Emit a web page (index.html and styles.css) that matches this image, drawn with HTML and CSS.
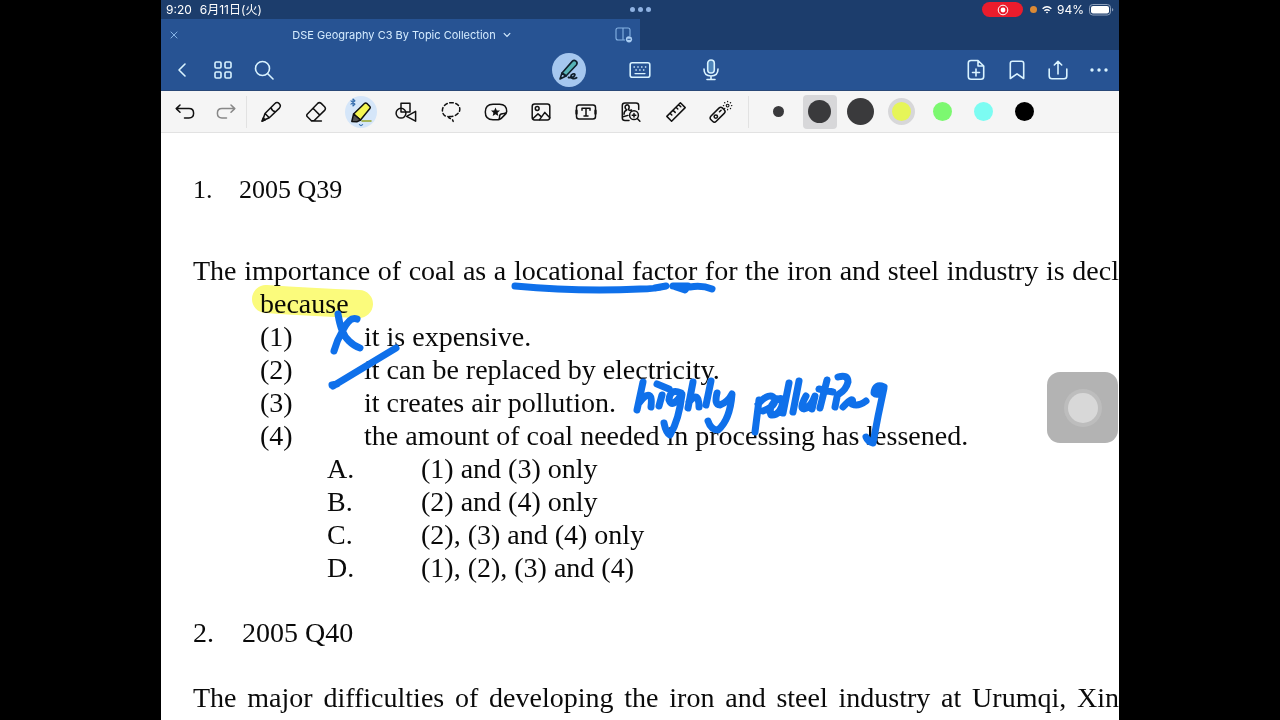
FILE: index.html
```html
<!DOCTYPE html>
<html lang="en">
<head>
    <meta charset="UTF-8">
    <meta name="viewport" content="width=device-width, initial-scale=1.0">
    <title>DSE Geography C3 By Topic Collection</title>
    <link rel="stylesheet" href="styles.css">
</head>
<body>
    <div class="screen">
        <header>
            <div class="status-bar">
                <div class="status-left"><span>9:20</span><span lang="ja">6月11日(火)</span></div>
                <div class="window-dots"><i></i><i></i><i></i></div>
                <div class="status-right">
                    <span class="recording">
                        <svg width="12" height="12" viewBox="0 0 12 12"><circle cx="6" cy="6" r="4.8" fill="none" stroke="#fff"/><circle cx="6" cy="6" r="2.4" fill="#fff"/></svg>
                    </span>
                    <span class="mic-dot"></span>
                    <svg width="10" height="8" viewBox="0 0 10 8" fill="none" stroke="#fff" stroke-width="1.4"><path d="M.6 2.8Q5-1.2 9.4 2.8M2.4 4.8Q5 2.6 7.6 4.8"/><path d="M3.8 6.2Q5 5.2 6.2 6.2L5 7.5z" fill="#fff" stroke="none"/></svg>
                    <span>94%</span>
                    <svg width="25" height="12" viewBox="0 0 25 12"><rect x=".5" y=".5" width="21" height="10.5" rx="3.2" fill="none" stroke="#8da0bc"/><rect x="2" y="2" width="18" height="7.5" rx="2" fill="#fff"/><path d="M23 4v3.5q1.3-.5 1.3-1.7T23 4" fill="#8da0bc"/></svg>
                </div>
            </div>

            <div class="tabs">
                <div class="tab">
                    <button class="tab-close" aria-label="Close tab">
                        <svg width="8" height="8" viewBox="0 0 8 8" fill="none" stroke="#86b3e4" stroke-width="1"><path d="M.7.7l6.6 6.6M7.3.7L.7 7.3"/></svg>
                    </button>
                    <button class="tab-title">DSE Geography C3 By Topic Collection
                        <svg width="8" height="6" viewBox="0 0 8 6" fill="none" stroke="#d5ecff" stroke-width="1.2"><path d="M.8 1.2L4 4.4l3.2-3.2"/></svg>
                    </button>
                    <button class="tab-split" aria-label="Split view">
                        <svg width="18" height="16" viewBox="0 0 18 16" fill="none" stroke="#86b3e4" stroke-width="1.1"><path d="M10 13H3Q1 13 1 11V3Q1 1 3 1h10q2 0 2 2v6M8 1v12"/><circle cx="14" cy="12.3" r="3.1" fill="#a9cdf3" stroke="none"/><path d="M12.4 12.3h3.2" stroke="#275393"/></svg>
                    </button>
                </div>
            </div>

            <nav class="nav-bar">
                <div class="nav-group">
                    <button aria-label="Back"><svg width="10" height="16" viewBox="0 0 10 16"><path d="M8 2L2 8l6 6"/></svg></button>
                    <button aria-label="Thumbnails"><svg width="20" height="20" viewBox="0 0 20 20"><rect x="2" y="2" width="6" height="6" rx="1.3"/><rect x="12" y="2" width="6" height="6" rx="1.3"/><rect x="2" y="12" width="6" height="6" rx="1.3"/><rect x="12" y="12" width="6" height="6" rx="1.3"/></svg></button>
                    <button aria-label="Search"><svg width="20" height="20" viewBox="0 0 20 20"><circle cx="8.5" cy="8.5" r="7"/><path d="M13.5 13.5l5.5 5.5"/></svg></button>
                </div>
                <div class="nav-group nav-modes">
                    <button aria-label="Pen mode">
                        <span class="mode-active">
                            <svg class="dark" width="24" height="24" viewBox="0 0 24 24"><path d="M5 15L15.2 3.4Q17 1.6 19 3.2T19.4 7L9 18z" fill="#56b3b6"/><path d="M5 15l-2 6L9 18M5 15l4 3"/><path d="M11.5 19.5c3 .6 6.4-.8 6.4-2.8-.4-1.8-4-.6-4 1.8.1 2.4 3.5 2.7 5.7 1.3" stroke-width="1.8"/></svg>
                        </span>
                    </button>
                    <button aria-label="Keyboard mode"><svg width="22" height="18" viewBox="0 0 22 18"><rect x="1.2" y="1.7" width="19.6" height="14.6" rx="2"/><path d="M5 6h.4M8.8 6h.4M12.6 6h.4M16.4 6h.4M6.9 9h.4M10.7 9h.4M14.5 9h.4M6 12.6h10" stroke-width="1.3"/></svg></button>
                    <button aria-label="Record audio"><svg width="18" height="22" viewBox="0 0 18 22"><rect x="5.7" y="1" width="6.6" height="13" rx="3.3" fill="#4d84b9"/><path d="M2 10q0 7 7 7t7-7M9 17v3.5M5 20.5h8"/></svg></button>
                </div>
                <div class="nav-group nav-end">
                    <button aria-label="Add page"><svg width="18" height="22" viewBox="0 0 18 22"><path d="M11 1.5H4Q1.3 1.5 1.3 4v13.5q0 2.7 2.7 2.7h10q2.7 0 2.7-2.7V7zV7h5.7M9 10v7M5.5 13.5h7"/></svg></button>
                    <button aria-label="Bookmark"><svg width="16" height="20" viewBox="0 0 16 20"><path d="M1.3 18.5V3.5q0-2.2 2.2-2.2h9q2.2 0 2.2 2.2v15L8 13.8z"/></svg></button>
                    <button aria-label="Share"><svg width="20" height="20" viewBox="0 0 20 20"><path d="M1.2 9v7q0 2.8 2.8 2.8h12q2.8 0 2.8-2.8V9M10 14V1.5M6.3 5L10 1.3 13.7 5"/></svg></button>
                    <button aria-label="More"><svg class="solid" width="18" height="4" viewBox="0 0 18 4"><circle cx="2" cy="2" r="1.7"/><circle cx="9" cy="2" r="1.7"/><circle cx="16" cy="2" r="1.7"/></svg></button>
                </div>
            </nav>
        </header>

        <div class="toolbar">
            <div class="history">
                <button aria-label="Undo"><svg width="20" height="16" viewBox="0 0 20 16"><path d="M5 1L1.2 4.6 5 8.2M1.2 4.6H14q4.6 0 4.6 4.7T14 14H9.5"/></svg></button>
                <button class="redo" aria-label="Redo" disabled><svg width="20" height="16" viewBox="0 0 20 16"><path d="M15 1l3.8 3.6L15 8.2M18.8 4.6H6Q1.4 4.6 1.4 9.3T6 14h4.5"/></svg></button>
            </div>
            <div class="tools">
                <button aria-label="Pen"><svg width="22" height="22" viewBox="0 0 22 22"><path d="M5 12.5l9.7-9.8Q17 .5 19.2 2.6t.2 4.5L9.3 16.7l-6.8 3zM5 12.5l4.3 4.2M11 6.8q1 3.4 4.4 4"/><path d="M3.2 17l-1.3 3.3 3.4-1.4z" fill="#333"/></svg></button>
                <button aria-label="Eraser"><svg width="22" height="22" viewBox="0 0 22 22"><path d="M2.2 13.2L12.6 2.4q1.8-1.6 3.6 0l3.4 3.4q1.6 1.8 0 3.6L9 19.8H6.4l-4-4q-1.2-1.2-.2-2.6zM8 7.3l6.8 6.8M6.4 20h10"/></svg></button>
                <button aria-label="Highlighter">
                    <span class="tool-active">
                        <svg width="32" height="32" viewBox="0 0 32 32"><path d="M8.6 18L19.7 7.3q1-.8 2 0l3.2 3.2q.8 1 0 2L15.5 24z" fill="#f5f653"/><path d="M8.6 18l-1.8 7.5 5 .3 3.7-1.8z" fill="#555"/><path d="M17 25h9" stroke="#96a526"/><path d="M6 4.8l4 3.4-2 1.8V3l2 1.8-4 3.4M14.4 28.6l1.6 1 1.6-1" stroke="#326bab" stroke-width="1.1"/></svg>
                    </span>
                </button>
                <button aria-label="Shapes"><svg width="22" height="22" viewBox="0 0 22 22"><circle cx="6" cy="12.2" r="4.9"/><path d="M6 7.3V2.3h9v8.8h-4.2M6 7.3v3.8h4.8M20.6 10.4v9.8l-9-4.8z"/></svg></button>
                <button aria-label="Lasso"><svg width="22" height="22" viewBox="0 0 22 22" stroke-dasharray="3.4 2.6"><path d="M9.5 15.5C14 16 19.8 13 19.8 8.2 19.8 3.6 15.5 1.7 11.5 1.7 6.5 1.7 2.4 5 2.4 9.4c0 3 1.6 5.8 4.2 5.8 2.4-.2 1.4 2.2 4.2 2.4 1.6.2 1.8 1.4 2.4 2.8"/></svg></button>
                <button aria-label="Stickers"><svg width="24" height="20" viewBox="0 0 24 20"><path d="M14.5 17.8H9Q1.3 17.8 1.3 10T9 2.2h6.5q7.2 0 7.2 7.2-.2 2-1.7 3.2l-4 4q-1 1.2-2.5 1.2zM14.8 17.5q.8-1.3.8-3 0-2.8 2.8-2.8 2 0 3.8-1"/><path d="M11.5 5.4l1.3 3 3.2.2-2.4 2.1.7 3.2-2.8-1.7-2.8 1.7.7-3.2L7 8.6l3.2-.2z" fill="#111" stroke="none"/></svg></button>
                <button aria-label="Image"><svg width="20" height="20" viewBox="0 0 20 20"><rect x="1.2" y="2" width="17.6" height="16" rx="2.4"/><circle cx="6.2" cy="6.5" r="1.9"/><path d="M2 16.5l5-4.6 3.4 3M8.6 17.6l5.2-7.2 5 5.4"/></svg></button>
                <button aria-label="Text"><svg width="22" height="18" viewBox="0 0 22 18"><path d="M1.5 7V4.5Q1.5 2 4 2h14q2.5 0 2.5 2.5V7M1.5 11v2.5Q1.5 16 4 16h14q2.5 0 2.5-2.5V11M7 7.3V5.2h8v2.1M11 5.2V13M9 13h4"/><path d="M1.5 7.6v2.8M20.5 7.6v2.8" stroke-width="2.4"/></svg></button>
                <button aria-label="Elements"><svg width="20" height="22" viewBox="0 0 20 22"><path d="M8 19.5H4Q1.3 19.5 1.3 17V4.5Q1.3 2 4 2h11q2.7 0 2.7 2.5V8.5M3 13.2q0-3.2 2.8-4.2Q3.6 7.4 4.2 5.2q1.2-2 3.2-1 1.6 1.6 0 4.2 1.4 1.6 3.2.6M2 15.8l5-1.4"/><circle cx="13" cy="14.2" r="4.4"/><path d="M16.3 17.5l2.6 2.7M13 12.4V16M11.2 14.2h3.6"/></svg></button>
                <button aria-label="Ruler"><svg width="22" height="22" viewBox="0 0 22 22"><path d="M1.8 15.4L15.4 1.8l4.8 4.8L6.6 20.2zM5 12.2l1.8 1.8M8 9.2l2.2 2.2M11 6.2l1.8 1.8M13.6 3.6l2.2 2.2"/></svg></button>
                <button aria-label="Laser pointer"><svg width="24" height="24" viewBox="0 0 24 24"><rect x=".4" y="11" width="16.4" height="7.4" rx="2.6" transform="rotate(-45 8.6 14.7)"/><circle cx="6.8" cy="16.6" r="1.7"/><path d="M10.5 11.8l1.6-1.6"/><circle cx="18.6" cy="5.6" r="1.4" stroke-width="1.1"/><path d="M18.6 1.4v.3M18.6 9.5v.3M14.4 5.6h.3M22.5 5.6h.3M15.6 2.6l.2.2M21.4 8.4l.2.2M21.6 2.6l-.2.2M15.8 8.4l-.2.2" stroke-width="1.3"/></svg></button>
            </div>
            <div class="swatches">
                <button aria-label="Thin stroke"><span class="dot thin"></span></button>
                <button aria-label="Medium stroke"><span class="selected-size"><span class="dot medium"></span></span></button>
                <button aria-label="Thick stroke"><span class="dot thick"></span></button>
                <button aria-label="Yellow"><span class="dot yellow"></span></button>
                <button aria-label="Green"><span class="dot green"></span></button>
                <button aria-label="Cyan"><span class="dot cyan"></span></button>
                <button aria-label="Black"><span class="dot black"></span></button>
            </div>
        </div>

        <main>
            <h2 class="small"><span>1.</span>2005 Q39</h2>
            <section>
                <p class="justified">The importance of coal as a locational factor for the iron and steel industry is decl</p>
                <div class="statements">
                    <p>because</p>
                    <div class="row"><span>(1)</span><span>it is expensive.</span></div>
                    <div class="row"><span>(2)</span><span>it can be replaced by electricity.</span></div>
                    <div class="row"><span>(3)</span><span>it creates air pollution.</span></div>
                    <div class="row"><span>(4)</span><span>the amount of coal needed in processing has lessened.</span></div>
                </div>
                <div class="options">
                    <div class="row"><span>A.</span><span>(1) and (3) only</span></div>
                    <div class="row"><span>B.</span><span>(2) and (4) only</span></div>
                    <div class="row"><span>C.</span><span>(2), (3) and (4) only</span></div>
                    <div class="row"><span>D.</span><span>(1), (2), (3) and (4)</span></div>
                </div>
            </section>
            <h2><span>2.</span>2005 Q40</h2>
            <p class="justified">The major difficulties of developing the iron and steel industry at Urumqi, Xin</p>

            <!-- highlighter and handwriting layers -->
            <svg class="ink marker" width="958" height="587" viewBox="161 133 958 587">
                <path d="M266 299Q310 302 359 304"/>
            </svg>
            <svg class="ink pen" width="958" height="587" viewBox="161 133 958 587">
                <path d="M515 286Q580 292 640 289Q655 289 665 286M655 288L666 286M673 286L688 286L685 290L676 287M690 287Q702 285 712 289"/>
                <path d="M338 314Q341 334 349 341Q354 346 360 348M357 319Q350 316 343 330Q337 340 334 351"/>
                <path d="M333 386L396 348M332 385L337 384"/>
                <path d="M643 382L637 410M639 403Q646 393 650 396Q652 398 651 407M657 384L669 389M662 395L659 406M681 393Q670 388 669 400Q672 409 682 394Q679 420 670 435Q666 433 664 423"/>
                <path d="M693 382L688 408M689 402Q699 390 699 407M711 381L706 405M717 393Q714 405 720 405Q728 402 732 394Q730 420 718 430Q711 430 708 421"/>
                <path d="M759 400L755 432M758 404Q770 391 775 399Q776 406 763 411M777 399Q768 407 771 415Q780 416 783 402Q782 396 777 400M789 383L783 413M799 381L793 412M806 396Q799 409 804 409Q811 407 815 396L812 409M827 380L820 408M819 389L833 392"/>
                <path d="M838 377Q848 374 848 382Q846 390 839 394M837 397L835 407M843 407Q855 394 852 404Q858 407 866 401M884 387Q875 383 874 393Q878 397 884 388Q878 415 873 443Q868 442 866 437"/>
            </svg>
            <button class="assistive" aria-label="AssistiveTouch"><span></span></button>
        </main>
    </div>
</body>
</html>
```
FILE: styles.css
```css
* {
    box-sizing: border-box;
}
body {
    margin: 0;
    padding: 0 161px;
    background: #000;
    font-family: Inter, "Noto Sans CJK JP", sans-serif;
}
.screen {
    height: 100vh;
    display: flex;
    flex-direction: column;
    overflow: hidden;
    background: #fff;
}
button {
    display: flex;
    align-items: center;
    justify-content: center;
    padding: 0;
    border: 0;
    background: none;
    font: inherit;
    color: inherit;
}
svg {
    display: block;
    flex-shrink: 0;
}
header {
    background: #1c3d6c;
    color: #fff;
}

/* status bar */
.status-bar {
    display: grid;
    grid-template-columns: 1fr auto 1fr;
    align-items: center;
    height: 19px;
    padding: 0 5px;
    font-size: 12px;
    line-height: 18px;
}
.status-left {
    display: flex;
    gap: 8px;
}
.window-dots {
    display: flex;
    gap: 3px;
}
.window-dots i {
    width: 5px;
    height: 5px;
    border-radius: 50%;
    background: #8fb2e2;
}
.status-right {
    display: flex;
    align-items: center;
    justify-content: flex-end;
    gap: 5px;
}
.recording {
    display: flex;
    align-items: center;
    justify-content: center;
    width: 41px;
    height: 15px;
    margin-right: 2px;
    border-radius: 8px;
    background: #ea1c2c;
}
.mic-dot {
    width: 7px;
    height: 7px;
    border-radius: 50%;
    background: #dc8a35;
}

/* tabs */
.tabs {
    height: 31px;
}
.tab {
    display: grid;
    grid-template-columns: 26px 1fr 32px;
    width: 50%;
    height: 100%;
    background: #275393;
}
.tab-title {
    gap: 7px;
    padding-left: 8px;
    font-size: 11px;
    color: #d5ecff;
}

/* navigation */
.nav-bar {
    display: grid;
    grid-template-columns: 1fr auto 1fr;
    height: 41px;
    background: #275393;
    border-bottom: 1px solid #294878;
}
.nav-group {
    display: flex;
}
.nav-group button {
    width: 41px;
}
.nav-group.nav-modes button {
    width: 71px;
}
.nav-end {
    justify-content: flex-end;
}
.nav-bar svg {
    fill: none;
    stroke: #d9f3ff;
    stroke-width: 1.6;
    stroke-linecap: round;
    stroke-linejoin: round;
}
.nav-bar svg.dark {
    stroke: #10202c;
}
.nav-bar svg.solid {
    fill: #d9f3ff;
    stroke: none;
}
.mode-active {
    display: flex;
    align-items: center;
    justify-content: center;
    width: 34px;
    height: 34px;
    border-radius: 50%;
    background: #a5c7ef;
}

/* toolbar */
.toolbar {
    display: flex;
    flex-shrink: 0;
    align-items: center;
    height: 42px;
    padding-left: 3px;
    background: #f5f5f5;
    border-bottom: 1px solid #e2e2e2;
}
.toolbar svg {
    fill: none;
    stroke: #111;
    stroke-width: 1.5;
    stroke-linecap: round;
    stroke-linejoin: round;
}
.history,
.tools,
.swatches {
    display: flex;
    align-items: center;
    height: 32px;
}
.history button,
.swatches button {
    width: 41px;
}
.history .redo svg {
    stroke: #888;
}
.tools {
    padding: 0 5px 0 1px;
    border-left: 1px solid #e2e2e2;
    border-right: 1px solid #e2e2e2;
}
.tools button {
    width: 45px;
}
.tool-active {
    border-radius: 50%;
    background: #d5e6f9;
}
.swatches {
    padding-left: 9px;
}
.selected-size {
    display: flex;
    align-items: center;
    justify-content: center;
    width: 34px;
    height: 34px;
    border-radius: 4px;
    background: #d7d7d9;
}
.dot {
    width: 19px;
    height: 19px;
    border-radius: 50%;
    background: #3a3a3c;
}
.dot.thin {
    width: 11px;
    height: 11px;
}
.dot.medium {
    width: 23px;
    height: 23px;
}
.dot.thick {
    width: 27px;
    height: 27px;
}
.dot.yellow {
    width: 27px;
    height: 27px;
    border: 4px solid #d7d7d9;
    background: #e6f558;
}
.dot.green {
    background: #7cf870;
}
.dot.cyan {
    background: #7cfcf2;
}
.dot.black {
    background: #000;
}

/* document */
main {
    position: relative;
    flex: 1;
    padding: 40px 0 0 32px;
    overflow: hidden;
    font-family: "Liberation Serif", serif;
    font-size: 28px;
    line-height: 33px;
    color: #0a0a0a;
    white-space: nowrap;
}
main p {
    margin: 0;
}
main h2 {
    display: grid;
    grid-template-columns: 49px 1fr;
    margin: 32px 0;
    font-size: 28px;
    font-weight: normal;
}
main h2.small {
    grid-template-columns: 46px 1fr;
    margin: 0 0 48px;
    font-size: 26px;
}
.statements {
    padding-left: 67px;
}
.options {
    padding-left: 134px;
}
.row {
    display: grid;
    grid-template-columns: 104px 1fr;
}
.options .row {
    grid-template-columns: 94px 1fr;
}
main .justified {
    white-space: normal;
    text-align-last: justify;
}
.ink {
    position: absolute;
    top: 0;
    left: 0;
    fill: none;
    stroke-linecap: round;
    stroke-linejoin: round;
    pointer-events: none;
}
.marker {
    stroke: #fbfb7c;
    stroke-width: 28;
    mix-blend-mode: multiply;
}
.pen {
    stroke: #0f70ea;
    stroke-width: 7;
}
.assistive {
    position: absolute;
    top: 239px;
    right: 1px;
    width: 71px;
    height: 71px;
    border-radius: 13px;
    background: #b3b3b3;
}
.assistive span {
    width: 30px;
    height: 30px;
    border-radius: 50%;
    background: #d8d8d8;
    box-shadow: 0 0 0 4px #bdbdbd;
}
```
